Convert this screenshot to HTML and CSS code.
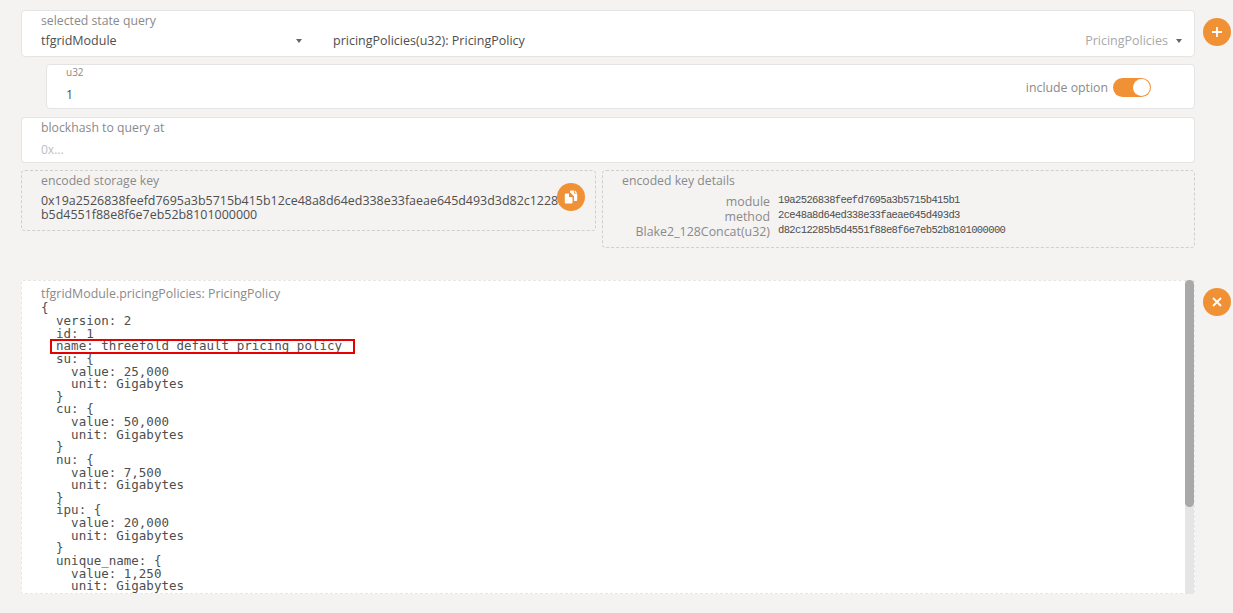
FILE: index.html
```html
<!DOCTYPE html>
<html lang="en">
<head>
<meta charset="utf-8">
<title>Chain state</title>
<link rel="stylesheet" href="styles.css">
</head>
<body>
<main class="page">
  <section class="with-action">
    <div class="stack">
      <div class="box select-box">
        <label class="label">selected state query</label>
        <div class="select-row">
          <div class="select-left"><span>tfgridModule</span><i class="caret"></i></div>
          <div class="select-right"><span>pricingPolicies(u32): PricingPolicy</span><span class="hint">PricingPolicies<i class="caret caret-hint"></i></span></div>
        </div>
      </div>
      <div class="param-wrap">
        <div class="box param-box">
          <div class="param-main">
            <label class="label label-small">u32</label>
            <div class="value">1</div>
          </div>
          <div class="option"><span>include option</span><span class="toggle"><span class="knob"></span></span></div>
        </div>
      </div>
      <div class="box hash-box">
        <label class="label">blockhash to query at</label>
        <div class="placeholder">0x...</div>
      </div>
      <div class="encoded">
        <div class="dashed key-box">
          <label class="label">encoded storage key</label>
          <div class="hex">0x19a2526838feefd7695a3b5715b415b12ce48a8d64ed338e33faeae645d493d3d82c12285<br>b5d4551f88e8f6e7eb52b8101000000</div>
          <span class="copy">
            <svg width="16" height="16" viewBox="0 0 16 16" aria-hidden="true"><path d="M8 1.500h3.200v3h3V11a1 1 0 0 1-1 1H11V7.200L7 3.200V2.500A1 1 0 0 1 8 1.500Z" fill="#fff"/><path d="M12 1.500l2.200 2.200H12Z" fill="#fff"/><path d="M2.800 4.500H6v3.500h3.500v5.500a1 1 0 0 1-1 1H2.800a1 1 0 0 1-1-1v-8a1 1 0 0 1 1-1Z" fill="#fff"/></svg>
          </span>
        </div>
        <div class="dashed details-box">
          <label class="label">encoded key details</label>
          <div class="details">
            <span class="d-key">module</span><span class="d-val">19a2526838feefd7695a3b5715b415b1</span>
            <span class="d-key">method</span><span class="d-val">2ce48a8d64ed338e33faeae645d493d3</span>
            <span class="d-key">Blake2_128Concat(u32)</span><span class="d-val">d82c12285b5d4551f88e8f6e7eb52b8101000000</span>
          </div>
        </div>
      </div>
    </div>
    <button class="round" aria-label="add"><svg width="12" height="12" viewBox="0 0 12 12"><path d="M6 1v10M1 6h10" stroke="#fff" stroke-width="1.800" fill="none"/></svg></button>
  </section>
  <section class="with-action result-row">
    <div class="result">
      <div class="scroll">
        <label class="label result-label">tfgridModule.pricingPolicies: PricingPolicy</label>
<pre class="code">{
  version: 2
  id: 1
  name: threefold default pricing policy
  su: {
    value: 25,000
    unit: Gigabytes
  }
  cu: {
    value: 50,000
    unit: Gigabytes
  }
  nu: {
    value: 7,500
    unit: Gigabytes
  }
  ipu: {
    value: 20,000
    unit: Gigabytes
  }
  unique_name: {
    value: 1,250
    unit: Gigabytes
  }</pre>
      </div>
      <span class="highlight"></span>
      <span class="track"><span class="thumb"></span></span>
    </div>
    <button class="round" aria-label="close"><svg width="12" height="12" viewBox="0 0 12 12"><path d="M2 2l8 8M10 2l-8 8" stroke="#fff" stroke-width="1.800" fill="none"/></svg></button>
  </section>
</main>
</body>
</html>
```
FILE: styles.css
```css
* { box-sizing: border-box; }
html, body { margin: 0; height: 100%; overflow: hidden; }
body {
  background: #f4f3f2;
  color: #4e4e4e;
  font-family: "Open Sans", "Noto Sans", sans-serif;
  font-size: 12.500px;
}
.page { padding: 10px 2px 0 21px; }
.with-action { display: grid; grid-template-columns: 1174px 28px; column-gap: 8px; align-items: start; }
.stack { display: flex; flex-direction: column; }
.box {
  background: #fff;
  border: 1px solid #e4e4e4;
  border-radius: 4px;
}
.label { display: block; color: #8a8a8a; font-size: 12.250px; line-height: 16px; }
.select-box { height: 47px; padding: 2px 19px 0; }
.select-row { display: grid; grid-template-columns: 292px 1fr; margin-top: 3px; line-height: 18px; }
.select-left { display: flex; justify-content: space-between; align-items: center; padding-right: 31px; }
.select-right { display: flex; justify-content: space-between; align-items: center; }
.hint { color: #a8a8a8; display: flex; align-items: center; margin-right: -7px; }
.caret { display: block; width: 0; height: 0; border: 3.500px solid transparent; border-top: 4px solid #666; border-bottom: 0; }
.caret-hint { margin-left: 8px; }
.param-wrap { padding: 7px 0 8px 25px; }
.param-box { height: 45px; display: flex; justify-content: space-between; padding: 0 43px 0 19px; }
.label-small { font-size: 10px; line-height: 14px; }
.value { margin-top: 7px; line-height: 18px; }
.option { display: flex; align-items: center; gap: 5px; color: #8a8a8a; font-size: 12.300px; height: 44px; }
.toggle { width: 38px; height: 19px; background: #f19135; border-radius: 10px; padding: 1px; display: flex; justify-content: flex-end; }
.knob { width: 17px; height: 17px; background: #fff; border-radius: 50%; }
.hash-box { height: 46px; padding: 2px 19px 0; }
.placeholder { color: #bdbdbd; font-size: 12px; margin-top: 5px; line-height: 18px; }
.encoded { display: grid; grid-template-columns: 575px 593px; column-gap: 6px; align-items: start; margin-top: 7px; }
.dashed { border: 1px dashed #cfcfcf; border-radius: 4px; position: relative; }
.key-box { height: 61px; padding: 2px 19px 0; }
.hex { margin-top: 5px; line-height: 14px; font-size: 12.450px; white-space: nowrap; }
.copy {
  position: absolute; left: 535px; top: 12px;
  width: 28px; height: 28px; border-radius: 50%; background: #f19135;
  display: flex; align-items: center; justify-content: center;
}
.details-box { height: 78px; padding: 2px 19px 0; }
.details { display: grid; grid-template-columns: 148px 1fr; column-gap: 8px; margin-top: 4px; }
.d-key { text-align: right; color: #8a8a8a; font-size: 12.400px; line-height: 17px; margin-bottom: -2px; white-space: nowrap; }
.d-val { font-family: "Liberation Mono", monospace; font-size: 10.500px; letter-spacing: -0.620px; line-height: 15px; }
.round {
  width: 28px; height: 28px; border: 0; padding: 0; border-radius: 50%;
  background: #f19135; display: flex; align-items: center; justify-content: center; margin-top: 8px;
}
.result-row { margin-top: 32px; }
.result { position: relative; height: 314px; background: #fff; border: 1px dashed #e6e6e6; border-radius: 2px; }
.scroll { height: 100%; overflow: hidden; padding: 5px 0 0 19px; }
.result-label { font-size: 12.400px; line-height: 16px; }
.code { margin: 0.400px 0 0; font-family: "DejaVu Sans Mono", monospace; font-size: 12.500px; line-height: 12.620px; color: #4e4e4e; }
.highlight { position: absolute; left: 28px; top: 58px; width: 305px; height: 15px; border: 2px solid #e60000; }
.track { position: absolute; top: -1px; bottom: -1px; right: 0; width: 9px; background: #e5e5e5; }
.thumb { display: block; height: 227px; background: #a9a9a9; border-radius: 5px; }
```
